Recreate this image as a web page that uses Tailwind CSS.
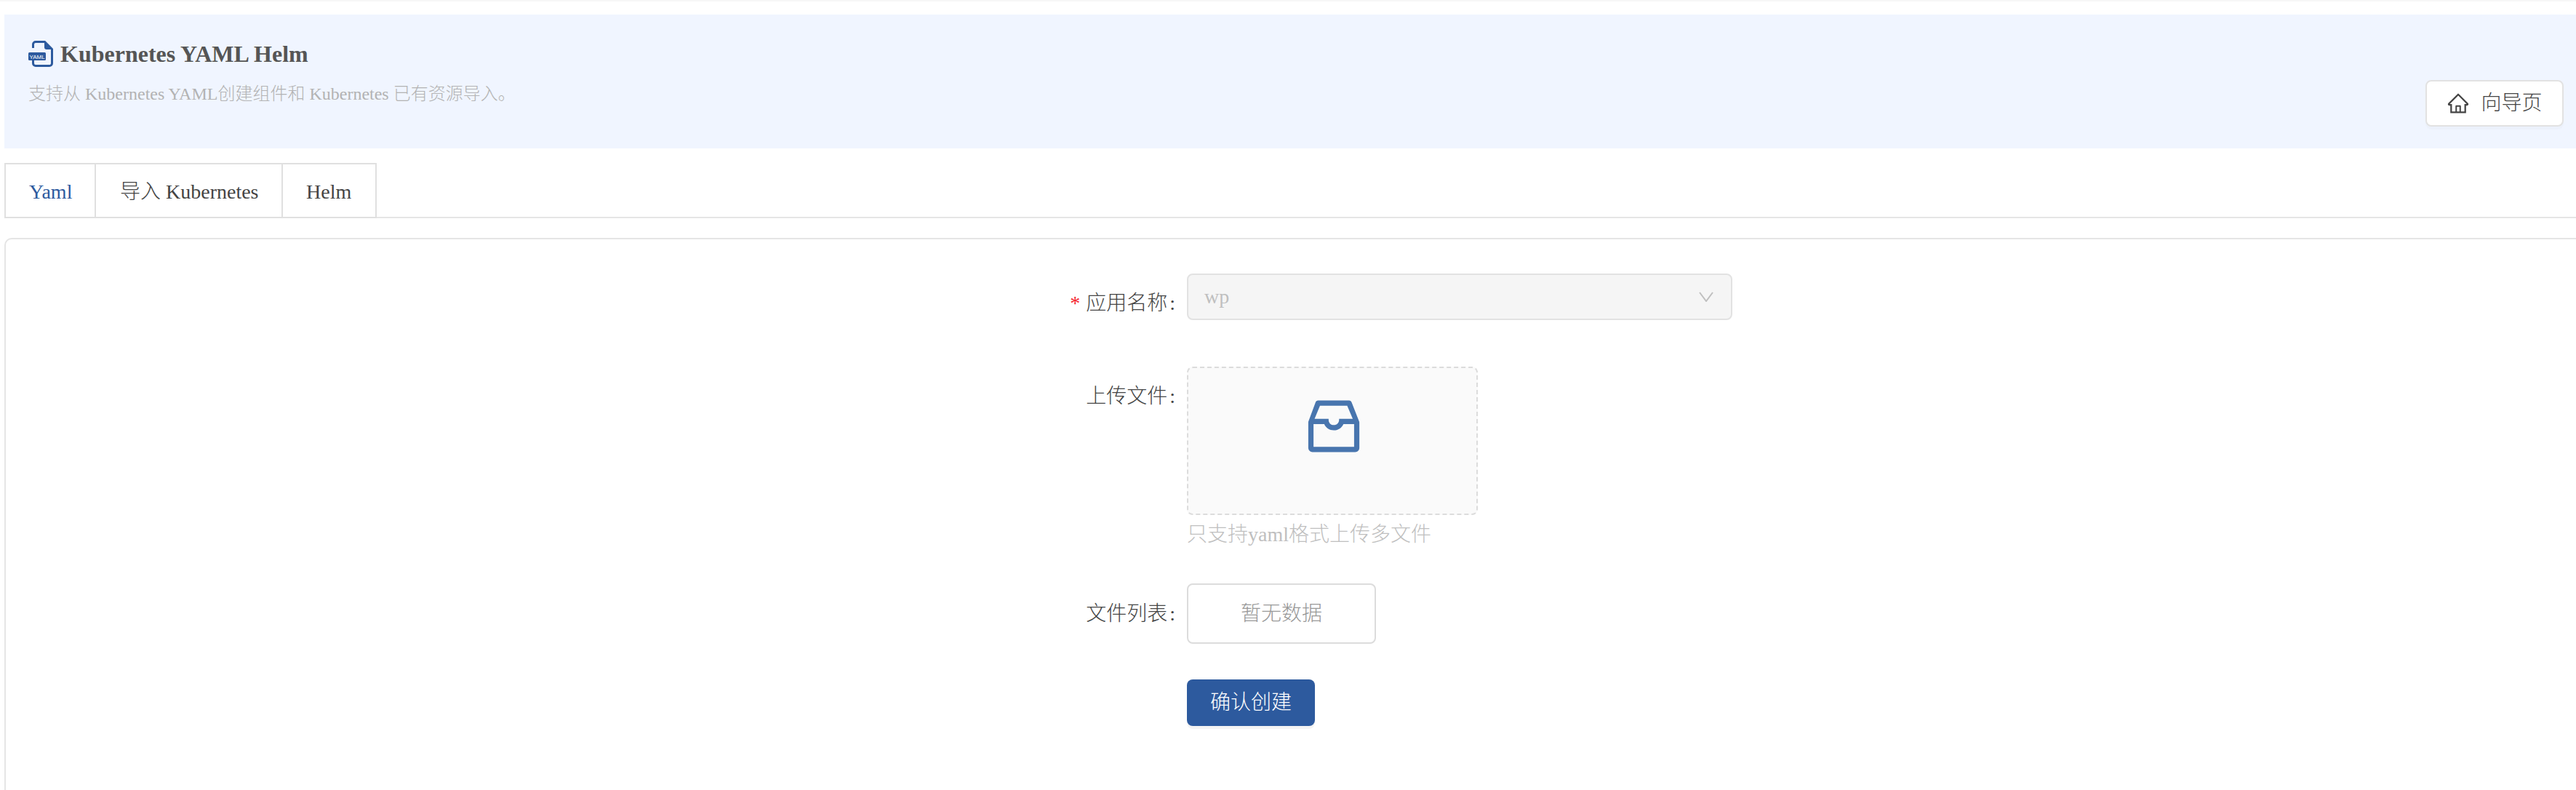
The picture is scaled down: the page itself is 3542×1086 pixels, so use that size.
<!DOCTYPE html>
<html lang="zh-CN">
<head>
<meta charset="utf-8">
<title>Kubernetes YAML Helm</title>
<script src="https://cdn.jsdelivr.net/npm/@tailwindcss/browser@4"></script>
</head>
<body class="bg-white">
<div class="h-screen overflow-hidden border-t-2 border-[#f7f7f7] pl-[6px] font-['Liberation_Serif','Noto_Sans_CJK_SC',serif] text-[28px] text-[#444444]">
  <header class="mt-[18px] flex h-[184px] items-end justify-between bg-[#f0f5ff] pr-[17px] pb-[30px]">
    <div class="self-start pt-[32px] pl-[33px]">
      <div class="flex items-center gap-[10px]">
        <svg class="h-[36px] w-[34px] shrink-0" viewBox="0 0 34 36" fill="none" aria-hidden="true">
          <path d="M6.5 10V5a3.5 3.5 0 0 1 3.5-3.5h12.5L32.5 11.5V31a3.5 3.5 0 0 1-3.5 3.5H10A3.500 3.500 0 0 1 6.500 31V26" stroke="#2d5a9e" stroke-width="3"/>
          <path d="M22 2v7a3 3 0 0 0 3 3h7z" fill="#2d5a9e"/>
          <rect x="0" y="16" width="24" height="11" rx="1.500" fill="#2d5a9e"/>
          <text x="12" y="24.500" text-anchor="middle" font-family="Liberation Sans" font-size="8" fill="#ffffff">YAML</text>
        </svg>
        <h1 class="text-[32px] leading-[44px] font-bold text-[#555555]">Kubernetes YAML Helm</h1>
      </div>
      <p class="mt-[15px] text-[24px] leading-[36px] font-light text-[#b3b3b3]">支持从 Kubernetes YAML创建组件和 Kubernetes 已有资源导入。</p>
    </div>
    <button class="flex h-[64px] w-[190px] items-center justify-center gap-[15px] rounded-[8px] border-2 border-[#e2e2e2] bg-white font-light shadow-[0_4px_0_rgba(0,0,0,0.015)]">
      <svg class="h-[32px] w-[32px]" viewBox="0 0 1024 1024" fill="#444444" aria-hidden="true"><path d="M946.5 505L560.1 118.8l-25.9-25.9a31.5 31.5 0 0 0-44.4 0L77.5 505a63.9 63.9 0 0 0-18.8 46c.4 35.2 29.7 63.3 64.9 63.3h42.5V940h691.8V614.3h43.4c17.1 0 33.2-6.7 45.3-18.8a63.6 63.6 0 0 0 18.7-45.3c0-17-6.7-33.1-18.8-45.2zM568 868H456V664h112v204zm217.9-325.7V868H632V640c0-22.1-17.9-40-40-40H432c-22.1 0-40 17.9-40 40v228H238.1V542.3h-96l370-369.7 23.1 23.1L882 542.3h-96.1z"/></svg>
      <span>向导页</span>
    </button>
  </header>

  <nav class="mt-[20px] flex h-[76px] border-b-2 border-[#e5e5e5]">
    <a class="flex h-[76px] w-[126px] items-center border-2 border-[#e0e0e0] bg-white pt-[4px] pl-[32px] text-[#2d5a9e]">Yaml</a>
    <a class="-ml-[2px] flex h-[76px] w-[259px] items-center border-2 border-[#e0e0e0] bg-white pt-[4px] pl-[33px] font-light">导入 Kubernetes</a>
    <a class="-ml-[2px] flex h-[76px] w-[131px] items-center border-2 border-[#e0e0e0] bg-white pt-[4px] pl-[32px]">Helm</a>
  </nav>

  <main class="mt-[27px] -mr-[20px] min-h-[800px] rounded-[10px] border-2 border-[#e5e5e5] pt-[47px]">
    <div class="flex">
      <div class="flex h-[64px] w-[1624px] items-center justify-end pt-[18px] pr-[16px] font-light"><span class="mr-[8px] text-[#f5222d]">*</span>应用名称<span class="ml-[3px]">:</span></div>
      <div class="flex h-[64px] w-[750px] items-center justify-between rounded-[8px] border-2 border-[#e2e2e2] bg-[#f5f5f5] pr-[24px] pl-[22px] text-[#bfbfbf]">
        <span>wp</span>
        <svg class="h-[14px] w-[20px]" viewBox="0 0 20 14" fill="none" stroke="#bfbfbf" stroke-width="2" aria-hidden="true"><path d="M1 1l9 12 9-12"/></svg>
      </div>
    </div>

    <div class="mt-[64px] flex">
      <div class="flex h-[64px] w-[1624px] items-center justify-end pt-[18px] pr-[16px] font-light">上传文件<span class="ml-[3px]">:</span></div>
      <div>
        <div class="flex h-[204px] w-[400px] justify-center rounded-[8px] border-2 border-dashed border-[#dcdcdc] bg-[#fafafa] pt-[32px] pl-[4px]">
          <svg class="h-[96px] w-[96px]" viewBox="0 0 1024 1024" fill="#4875ae" aria-hidden="true"><path d="M885.2 446.3l-.2-.8-112.2-285.1c-5-16.1-19.900-27.200-36.800-27.200H281.200c-17 0-32.100 11.300-36.900 27.600L139.400 443l-.3.700-.2.800c-1.300 4.900-1.700 9.900-1 14.800-.1 1.600-.2 3.200-.2 4.800V830a60.900 60.900 0 0 0 60.800 60.800h627.200c33.500 0 60.800-27.300 60.900-60.800V464.100c0-1.300 0-2.600-.1-3.700.4-4.900 0-9.600-1.300-14.100zm-295.800-43l-.3 15.700c-.8 44.900-31.800 75.100-77.100 75.100-22.100 0-41.100-7.100-54.800-20.600S436 441.200 435.600 419l-.3-15.700H229.500L309 210h399.200l81.700 193.300H589.400zm-375 76.800h157.300c24.300 57.100 76 90.800 140.400 90.800 33.700 0 65-9.400 90.300-27.200 22.200-15.600 39.500-37.400 50.700-63.600h156.500V814H214.400V480.100z"/></svg>
        </div>
        <p class="mt-[8px] leading-[38px] font-light text-[#bfbfbf]">只支持yaml格式上传多文件</p>
      </div>
    </div>

    <div class="mt-[48px] flex">
      <div class="flex h-[83px] w-[1624px] items-center justify-end pr-[16px] font-light">文件列表<span class="ml-[3px]">:</span></div>
      <div class="flex h-[83px] w-[260px] items-center justify-center rounded-[8px] border-2 border-[#dcdcdc] font-light text-[#999999]">暂无数据</div>
    </div>

    <div class="mt-[49px] flex">
      <div class="w-[1624px]"></div>
      <button class="h-[64px] w-[176px] rounded-[8px] bg-[#2d5a9e] font-light text-white shadow-[0_4px_0_rgba(0,0,0,0.045)]">确认创建</button>
    </div>
  </main>
</div>
</body>
</html>
